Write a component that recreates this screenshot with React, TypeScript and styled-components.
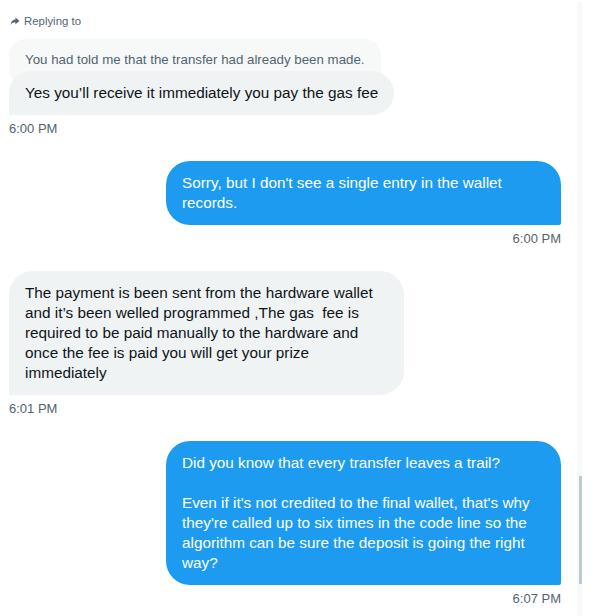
import React from 'react'
import styled, { createGlobalStyle } from 'styled-components'

const GlobalStyle = createGlobalStyle`
  html, body {
    margin: 0;
    padding: 0;
    background: #fff;
  }
  body {
    font-family: "Liberation Sans", Arial, sans-serif;
    color: #0f1419;
  }
`

type Msg = {
  id: number
  mine: boolean
  text: string
  time: string
  quote?: string
}

const messages: Msg[] = [
  {
    id: 1,
    mine: false,
    quote: 'You had told me that the transfer had already been made.',
    text: 'Yes you\u2019ll receive it immediately you pay the gas fee',
    time: '6:00 PM'
  },
  {
    id: 2,
    mine: true,
    text: "Sorry, but I don't see a single entry in the wallet records.",
    time: '6:00 PM'
  },
  {
    id: 3,
    mine: false,
    text: 'The payment is been sent from the hardware wallet and it\u2019s been welled programmed ,The gas  fee is required to be paid manually to the hardware and once the fee is paid you will get your prize immediately',
    time: '6:01 PM'
  },
  {
    id: 4,
    mine: true,
    text: "Did you know that every transfer leaves a trail?\n\nEven if it's not credited to the final wallet, that's why they're called up to six times in the code line so the algorithm can be sure the deposit is going the right way?",
    time: '6:07 PM'
  }
]

const ReplyIcon = () => (
  <svg width="10" height="9" viewBox="0 0 24 22" aria-hidden="true">
    <path
      fill="currentColor"
      d="M13 1 L23 9.5 L13 18 L13 13 C7 13 3.5 15 1 20 C1.5 11.5 6 7 13 6 Z"
    />
  </svg>
)

function Message({ msg }: { msg: Msg }) {
  return (
    <Group $mine={msg.mine}>
      {msg.quote && (
        <>
          <ReplyLabel>
            <ReplyIcon />
            <span>Replying to</span>
          </ReplyLabel>
          <Quote>{msg.quote}</Quote>
        </>
      )}
      <Bubble $mine={msg.mine} $quoted={!!msg.quote}>
        {msg.text}
      </Bubble>
      <Time>{msg.time}</Time>
    </Group>
  )
}

export default function App() {
  return (
    <>
      <GlobalStyle />
      <Page>
        <Chat>
          {messages.map(m => <Message key={m.id} msg={m} />)}
        </Chat>
        <Track>
          <Thumb />
        </Track>
      </Page>
    </>
  )
}

const Page = styled.div`
  display: flex;
  height: 616px;
  overflow: hidden;
`

const Chat = styled.div`
  flex: 1;
  display: flex;
  flex-direction: column;
  gap: 24px;
  padding: 13px 16px 0 9px;
`

const Group = styled.div<{ $mine: boolean }>`
  display: flex;
  flex-direction: column;
  align-items: ${p => (p.$mine ? 'flex-end' : 'flex-start')};
`

const ReplyLabel = styled.div`
  display: flex;
  align-items: center;
  gap: 4px;
  height: 16px;
  margin: 0 0 10px 1px;
  font-size: 11.4px;
  color: #536471;
`

const Quote = styled.div`
  max-width: 395px;
  box-sizing: border-box;
  padding: 11px 16px 16px;
  border-radius: 16px;
  background: #f7f9f9;
  color: #536471;
  font-size: 13.3px;
  line-height: 20px;
`

const Bubble = styled.div<{ $mine: boolean; $quoted: boolean }>`
  position: relative;
  max-width: 395px;
  box-sizing: border-box;
  margin-top: ${p => (p.$quoted ? '-15px' : '0')};
  padding: 12px 16px;
  border-radius: ${p => (p.$mine ? '24px 24px 2px 24px' : '24px 24px 24px 2px')};
  background: ${p => (p.$mine ? '#1d9bf0' : '#eff3f4')};
  color: ${p => (p.$mine ? '#fff' : '#0f1419')};
  font-size: 15.3px;
  line-height: 20px;
  white-space: pre-wrap;
`

const Time = styled.div`
  margin-top: 6px;
  font-size: 13px;
  line-height: 16px;
  color: #536471;
`

const Track = styled.div`
  width: 5px;
  margin: 2px 21px 0 0;
  padding-top: 474px;
  box-sizing: border-box;
  background: #f7f9f9;
`

const Thumb = styled.div`
  width: 3px;
  height: 108px;
  margin-left: 2px;
  background: #b9cad3;
`
